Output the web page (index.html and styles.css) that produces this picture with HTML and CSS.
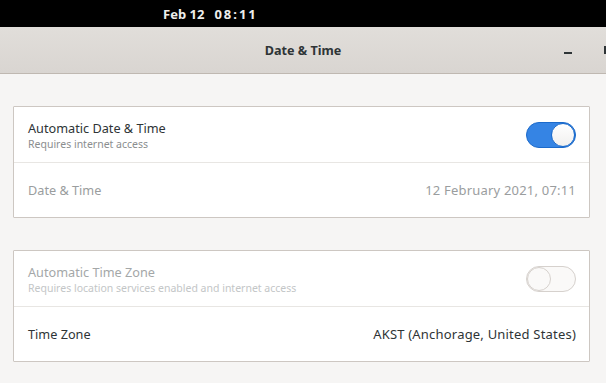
FILE: index.html
```html
<!DOCTYPE html>
<html lang="en">

<head>
    <meta charset="UTF-8">
    <meta name="viewport" content="width=device-width, initial-scale=1.0">
    <title>Date &amp; Time</title>
    <link rel="stylesheet" href="styles.css">
</head>

<body>
    <div class="topbar">
        <span class="clock">Feb 12</span>
        <span class="clock time">08:11</span>
    </div>

    <div class="headerbar">
        <span class="title">Date &amp; Time</span>
        <span class="win-btn minimize"></span>
        <span class="win-btn maximize"></span>
    </div>

    <div class="content">
        <div class="card">
            <div class="row">
                <div class="labels">
                    <div class="label">Automatic Date &amp; Time</div>
                    <div class="sublabel">Requires internet access</div>
                </div>
                <div class="switch on"><span class="knob"></span></div>
            </div>
            <div class="row short">
                <div class="label dim">Date &amp; Time</div>
                <div class="value dim">12 February 2021, 07:11</div>
            </div>
        </div>

        <div class="card">
            <div class="row disabled">
                <div class="labels">
                    <div class="label">Automatic Time Zone</div>
                    <div class="sublabel">Requires location services enabled and internet access</div>
                </div>
                <div class="switch off"><span class="knob"></span></div>
            </div>
            <div class="row short">
                <div class="label">Time Zone</div>
                <div class="value">AKST (Anchorage, United States)</div>
            </div>
        </div>
    </div>
</body>

</html>
```

FILE: styles.css
```css
body {
    margin: 0;
    font-family: "Noto Sans", "Open Sans", sans-serif;
    font-size: 13px;
    color: #2e3436;
    background-color: #f6f5f4;
    overflow: hidden;
}

.topbar {
    height: 27px;
    background: #000;
    display: flex;
    align-items: center;
    gap: 10px;
    padding-left: 163px;
}

.clock {
    color: #eeeeec;
    font-weight: bold;
    font-size: 13px;
}

.clock.time {
    letter-spacing: 2px;
}

.headerbar {
    height: 46px;
    background: linear-gradient(#e1deda, #d9d5d1);
    border-bottom: 1px solid #bfb8b1;
    display: flex;
    align-items: center;
    justify-content: center;
    position: relative;
}

.title {
    font-weight: bold;
    font-size: 12.6px;
    color: #2e3436;
}

.win-btn {
    position: absolute;
    background: #2e3436;
}

.minimize {
    left: 564px;
    top: 25px;
    width: 8px;
    height: 2px;
}

.maximize {
    left: 604px;
    top: 19px;
    width: 2px;
    height: 8px;
}

.content {
    padding: 32px 16px 0 13px;
    display: flex;
    flex-direction: column;
    gap: 32px;
}

.card {
    background: #fff;
    border: 1px solid #cdc7c2;
    border-radius: 1px;
}

.row {
    height: 55px;
    padding: 0 13px 0 14px;
    display: flex;
    align-items: center;
    justify-content: space-between;
    border-bottom: 1px solid #e8e6e3;
}

.row.short {
    height: 54px;
    border-bottom: none;
}

.labels {
    padding-top: 1px;
}

.label {
    font-size: 12.7px;
}

.sublabel {
    font-size: 10.5px;
    color: #8b8e8f;
}

.dim {
    color: #9a9d9e;
}

.disabled .label {
    color: #a4a7a8;
}

.disabled .sublabel {
    color: #c3c6c7;
}

.value {
    font-size: 13px;
    letter-spacing: 0.2px;
}

.switch {
    width: 48px;
    height: 24px;
    border-radius: 14px;
    border: 1px solid;
    display: flex;
    align-items: center;
}

.switch .knob {
    width: 24px;
    height: 24px;
    border-radius: 50%;
    box-sizing: border-box;
}

.switch.on {
    background: #3584e4;
    border-color: #1b6acb;
    justify-content: flex-end;
}

.switch.on .knob {
    background: linear-gradient(#ffffff, #f1f0ef);
    border: 1px solid #1b6acb;
}

.switch.off {
    background: #faf9f8;
    border-color: #d6d1cd;
    justify-content: flex-start;
}

.switch.off .knob {
    background: #faf9f8;
    border: 1px solid #d6d1cd;
}
```
